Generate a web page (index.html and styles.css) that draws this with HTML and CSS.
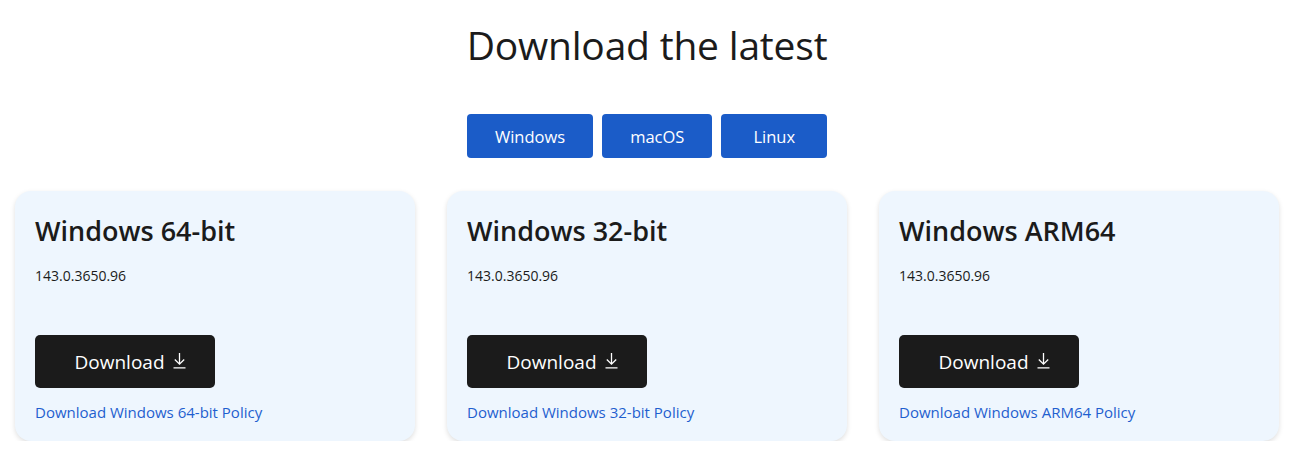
FILE: index.html
```html
<!DOCTYPE html>
<html lang="en">
<head>
    <meta charset="UTF-8">
    <meta name="viewport" content="width=device-width, initial-scale=1.0">
    <title>Download the latest</title>
    <link rel="stylesheet" href="styles.css">
</head>
<body>
    <div class="page">
        <h1 class="title">Download the latest</h1>

        <div class="tabs">
            <button class="tab">Windows</button>
            <button class="tab">macOS</button>
            <button class="tab tab-wide">Linux</button>
        </div>

        <div class="cards">
            <div class="card">
                <h2 class="card-title">Windows 64-bit</h2>
                <div class="version">143.0.3650.96</div>
                <button class="download-btn">Download
                    <svg class="arrow" width="13" height="17" viewBox="0 0 13 17"><path d="M6.5 1v11M1.8 7.5l4.7 4.7 4.7-4.7M0.5 15.8h12" fill="none" stroke="#fff" stroke-width="1.3"/></svg>
                </button>
                <a class="policy" href="#">Download Windows 64-bit Policy</a>
            </div>
            <div class="card">
                <h2 class="card-title">Windows 32-bit</h2>
                <div class="version">143.0.3650.96</div>
                <button class="download-btn">Download
                    <svg class="arrow" width="13" height="17" viewBox="0 0 13 17"><path d="M6.5 1v11M1.8 7.5l4.7 4.7 4.7-4.7M0.5 15.8h12" fill="none" stroke="#fff" stroke-width="1.3"/></svg>
                </button>
                <a class="policy" href="#">Download Windows 32-bit Policy</a>
            </div>
            <div class="card">
                <h2 class="card-title">Windows ARM64</h2>
                <div class="version">143.0.3650.96</div>
                <button class="download-btn">Download
                    <svg class="arrow" width="13" height="17" viewBox="0 0 13 17"><path d="M6.5 1v11M1.8 7.5l4.7 4.7 4.7-4.7M0.5 15.8h12" fill="none" stroke="#fff" stroke-width="1.3"/></svg>
                </button>
                <a class="policy" href="#">Download Windows ARM64 Policy</a>
            </div>
        </div>
    </div>
</body>
</html>
```

FILE: styles.css
```css
body {
    margin: 0;
    background: #fff;
    color: #1b1b1b;
    font-family: "Open Sans", "Noto Sans", sans-serif;
}

.page {
    width: 1264px;
    margin-left: 15px;
}

.title {
    margin: 0;
    padding-top: 20px;
    text-align: center;
    font-size: 39px;
    font-weight: 400;
    line-height: 50px;
    letter-spacing: -0.2px;
}

.tabs {
    display: flex;
    justify-content: center;
    gap: 9px;
    margin-top: 44px;
}

.tab {
    height: 44px;
    padding: 0 28px;
    background: #1b5cc8;
    color: #fff;
    border: none;
    border-radius: 4px;
    font-family: inherit;
    font-size: 16.5px;
    cursor: pointer;
}

.tab-wide {
    padding: 0 32px;
}

.cards {
    display: grid;
    grid-template-columns: repeat(3, 400px);
    gap: 32px;
    margin-top: 33px;
}

.card {
    background: #eef6fe;
    border-radius: 16px;
    padding: 20px 20px 19px;
    height: 250px;
    box-sizing: border-box;
    box-shadow: 0 2px 5px rgba(0, 0, 0, 0.13);
    display: flex;
    flex-direction: column;
    align-items: flex-start;
}

.card-title {
    margin: 0;
    font-size: 27px;
    font-weight: 600;
    line-height: 40px;
}

.version {
    margin-top: 15px;
    font-size: 14px;
    line-height: 20px;
}

.download-btn {
    margin-top: auto;
    width: 180px;
    height: 53px;
    padding: 0 0 0 10px;
    background: #1b1b1b;
    color: #fff;
    border: none;
    border-radius: 5px;
    font-family: inherit;
    font-size: 19px;
    display: flex;
    align-items: center;
    justify-content: center;
    gap: 8px;
    cursor: pointer;
}

.arrow {
    margin-top: -2px;
}

.policy {
    margin-top: 14px;
    color: #1f5fcf;
    font-size: 15px;
    text-decoration: none;
}
```
